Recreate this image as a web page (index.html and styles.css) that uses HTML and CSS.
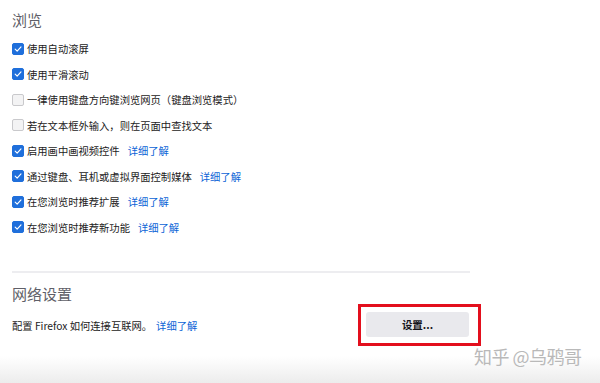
FILE: index.html
```html
<!DOCTYPE html>
<html lang="zh-CN">
<head>
<meta charset="utf-8">
<title>浏览设置</title>
<link rel="stylesheet" href="styles.css">
</head>
<body>
<main class="page">
  <h2 class="section-title">浏览</h2>
  <ul class="options">
    <li class="option"><span class="box checked"><svg viewBox="0 0 12 12"><path d="M2.6 6.2 L5 8.6 L9.6 3.4" /></svg></span><span class="label">使用自动滚屏</span></li>
    <li class="option"><span class="box checked"><svg viewBox="0 0 12 12"><path d="M2.6 6.2 L5 8.6 L9.6 3.4" /></svg></span><span class="label">使用平滑滚动</span></li>
    <li class="option"><span class="box"></span><span class="label">一律使用键盘方向键浏览网页（键盘浏览模式）</span></li>
    <li class="option"><span class="box"></span><span class="label">若在文本框外输入，则在页面中查找文本</span></li>
    <li class="option"><span class="box checked"><svg viewBox="0 0 12 12"><path d="M2.6 6.2 L5 8.6 L9.6 3.4" /></svg></span><span class="label">启用画中画视频控件</span><a class="link" href="#">详细了解</a></li>
    <li class="option"><span class="box checked"><svg viewBox="0 0 12 12"><path d="M2.6 6.2 L5 8.6 L9.6 3.4" /></svg></span><span class="label">通过键盘、耳机或虚拟界面控制媒体</span><a class="link" href="#">详细了解</a></li>
    <li class="option"><span class="box checked"><svg viewBox="0 0 12 12"><path d="M2.6 6.2 L5 8.6 L9.6 3.4" /></svg></span><span class="label">在您浏览时推荐扩展</span><a class="link" href="#">详细了解</a></li>
    <li class="option"><span class="box checked"><svg viewBox="0 0 12 12"><path d="M2.6 6.2 L5 8.6 L9.6 3.4" /></svg></span><span class="label">在您浏览时推荐新功能</span><a class="link" href="#">详细了解</a></li>
  </ul>
  <hr class="sep">
  <h2 class="section-title net-title">网络设置</h2>
  <div class="net-row">
    <p class="net-text">配置 Firefox 如何连接互联网。<a class="link" href="#">详细了解</a></p>
    <div class="highlight"><button class="btn">设置...</button></div>
  </div>
</main>
<div class="watermark">知乎 @乌鸦哥</div>
</body>
</html>
```

FILE: styles.css
```css
html {
  background: linear-gradient(to bottom, #ffffff 0, #ffffff 356px, #ececec 383px);
  min-height: 100%;
}
body {
  margin: 0;
  height: 383px;
  overflow: hidden;
  font-family: "Noto Sans CJK SC", "Liberation Sans", sans-serif;
  color: #1c1b22;
}
.page {
  padding: 10px 0 0 12px;
}
.section-title {
  margin: 0;
  font-size: 15px;
  line-height: 20px;
  font-weight: 400;
  color: #5f5f68;
}
.options {
  list-style: none;
  margin: 6px 0 0;
  padding: 0;
}
.option {
  display: flex;
  align-items: center;
  height: 25.5px;
  font-size: 10.3px;
}
.box {
  width: 12px;
  height: 12px;
  box-sizing: border-box;
  border-radius: 2px;
  border: 1px solid #c9c9cc;
  background: #f3f3f4;
  margin-right: 3px;
  flex: none;
  display: flex;
}
.box.checked {
  background: #1f6fdb;
  border-color: #1f6fdb;
}
.box svg {
  width: 10px;
  height: 10px;
}
.box path {
  fill: none;
  stroke: #ffffff;
  stroke-width: 1.4;
  stroke-linecap: round;
  stroke-linejoin: round;
}
.label {
  white-space: nowrap;
}
.link {
  color: #0b63d6;
  text-decoration: none;
  margin-left: 8px;
}
.sep {
  width: 458px;
  margin: 31px 0 0;
  border: 0;
  height: 2px;
  background: #ededf0;
}
.net-title {
  margin-top: 11px;
}
.net-row {
  width: 469px;
  display: flex;
  align-items: center;
  justify-content: space-between;
}
.net-text {
  margin: 0;
  font-size: 10.3px;
}
.net-text .link {
  margin-left: 4px;
}
.highlight {
  border: 3px solid #e30f1d;
  padding: 5px 9px 6px 5px;
}
.btn {
  display: block;
  width: 103px;
  height: 25px;
  border: 0;
  border-radius: 3px;
  background: #e9e9ed;
  font-family: "Noto Sans CJK SC", "Liberation Sans", sans-serif;
  font-size: 10.5px;
  font-weight: 700;
  color: #15141a;
  padding: 0;
}
.watermark {
  position: absolute;
  left: 474px;
  top: 344px;
  font-family: "Noto Sans CJK SC", sans-serif;
  font-size: 18px;
  line-height: 24px;
  color: #b9b9b9;
  letter-spacing: -0.5px;
  text-shadow: 0 0 1px #ffffff;
  white-space: nowrap;
}
```
